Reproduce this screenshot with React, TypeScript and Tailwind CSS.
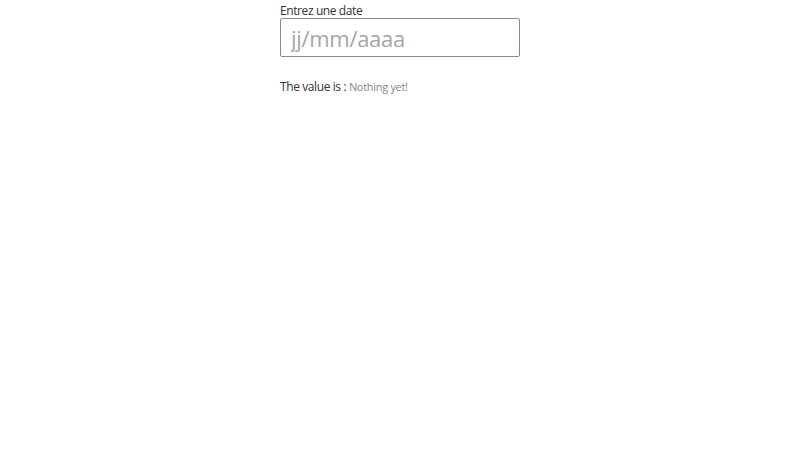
import React from "react";

export default function App() {
  return (
    <div className="w-[800px] h-[450px] bg-white flex justify-center" style={{ fontFamily: '"Open Sans", "Noto Sans", sans-serif' }}>
      <div className="w-[240px] flex flex-col">
        <label className="text-[12px] tracking-[-0.4px] pt-[3px] leading-[15px] text-[#333] h-[18px]">Entrez une date</label>
        <input
          type="text"
          placeholder="jj/mm/aaaa"
          className="w-[240px] h-[39px] border border-[#8a8a8a] rounded-[2px] pl-[10px] text-[22px] tracking-[-0.3px] text-[#333] placeholder:text-[#a6a6a6] outline-none"
          style={{ fontFamily: '"Open Sans", "Noto Sans", sans-serif' }}
        />
        <div className="mt-[21px] text-[12px] tracking-[-0.4px] leading-[18px] text-[#333]">
          The value is : <span className="text-[11px] tracking-[-0.3px] text-[#888]">Nothing yet!</span>
        </div>
      </div>
    </div>
  );
}
